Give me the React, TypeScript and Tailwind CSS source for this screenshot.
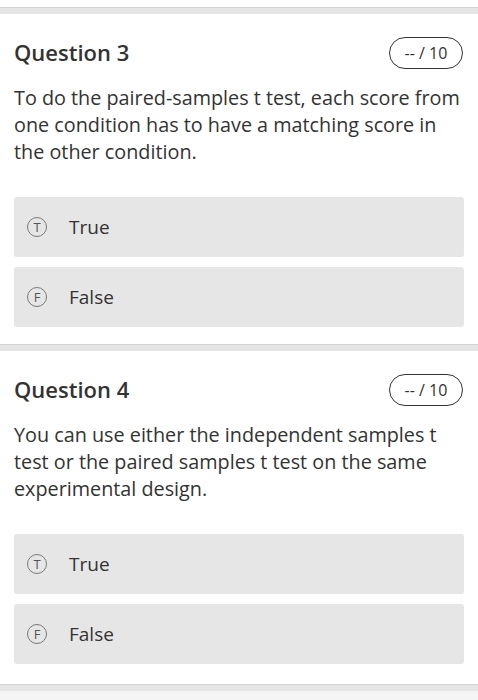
import React from 'react';

type Q = { n: number; text: string };

const questions: Q[] = [
  { n: 3, text: 'To do the paired-samples t test, each score from one condition has to have a matching score in the other condition.' },
  { n: 4, text: 'You can use either the independent samples t test or the paired samples t test on the same experimental design.' },
];

const Separator = () => (
  <div>
    <div className="h-px bg-[#d3d3d3]" />
    <div className="h-[6px] bg-[#e5e5e5]" />
  </div>
);

const Option = ({ letter, label }: { letter: string; label: string }) => (
  <div className="flex h-[60px] items-center rounded-[3px] bg-[#e6e6e6] pl-[13px]">
    <span className="flex h-[20px] w-[20px] items-center justify-center rounded-full border border-[#7a7a7a] text-[13px] leading-none text-[#555]">
      {letter}
    </span>
    <span className="ml-[22px] text-[19px] text-[#333]">{label}</span>
  </div>
);

const Question = ({ q, last }: { q: Q; last: boolean }) => (
  <div className={`px-[14px] pt-[22px] ${last ? 'pb-[20px]' : 'pb-[17px]'}`}>
    <div className="flex items-center justify-between pr-px">
      <h2 className="text-[22px] font-semibold text-[#333]">Question {q.n}</h2>
      <span className="flex h-[32px] w-[74px] items-center justify-center rounded-full border border-[#333] text-[16px] text-[#333]">
        -- / 10
      </span>
    </div>
    <p className="mt-[15px] text-[19.8px] leading-[27px] text-[#333]">{q.text}</p>
    <div className="mt-[32px] flex flex-col gap-[10px]">
      <Option letter="T" label="True" />
      <Option letter="F" label="False" />
    </div>
  </div>
);

export default function App() {
  return (
    <div className="min-h-[700px] bg-white" style={{ fontFamily: '"Open Sans", "Noto Sans", sans-serif' }}>
      <div className="h-[7px]" />
      {questions.map((q, i) => (
        <div key={q.n}>
          <Separator />
          <Question q={q} last={i === questions.length - 1} />
        </div>
      ))}
      <Separator />
      <div className="h-[20px] bg-[#f5f5f5]" />
    </div>
  );
}
